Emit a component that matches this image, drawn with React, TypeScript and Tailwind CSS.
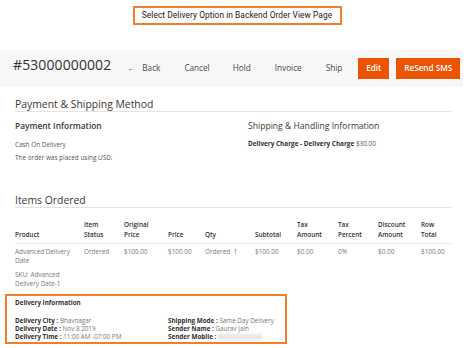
import React from "react";

const gridCols = "grid grid-cols-[69px_40px_44px_37px_50px_42px_41px_40px_43px_31px]";

export default function App() {
  return (
    <div className="w-[474px] h-[348px] bg-white overflow-hidden font-['Open_Sans',sans-serif] text-[#303030]">
      {/* Caption box */}
      <div className="flex justify-center pt-[6px]">
        <div className="w-[209px] h-[19px] border-2 border-[#ef7f2c] flex items-center justify-center text-[8.4px] text-[#222] font-['Roboto',sans-serif] tracking-[0.05px]">
          Select Delivery Option in Backend Order View Page
        </div>
      </div>

      {/* Header band */}
      <div className="mt-[25px] w-[463px] h-[37px] bg-[#f7f7f7] flex items-center pl-[13px] text-[8.2px] text-[#514943]">
        <div className="text-[14px] text-[#333] leading-none -mt-[8px] tracking-[0.1px]">#53000000002</div>
        <div className="ml-[16px] flex items-center">
          <span className="text-[8px] mr-[7px]">&#8592;</span>
          <span>Back</span>
        </div>
        <span className="ml-[24px]">Cancel</span>
        <span className="ml-[23px]">Hold</span>
        <span className="ml-[24px]">Invoice</span>
        <span className="ml-[24px]">Ship</span>
        <div className="ml-[16px] w-[31px] h-[21px] bg-[#eb5202] text-white font-semibold flex items-center justify-center">Edit</div>
        <div className="ml-[7px] w-[64px] h-[21px] bg-[#eb5202] text-white font-semibold flex items-center justify-center">ReSend SMS</div>
      </div>

      {/* Payment & Shipping */}
      <div className="ml-[15px] w-[437px] mt-[10px]">
        <div className="h-[15px] text-[10.4px] leading-[14px] text-[#41362f] border-b border-[#e3e3e3]">Payment &amp; Shipping Method</div>
        <div className="flex">
          <div className="w-[233px]">
            <div className="mt-[8px] text-[8.4px] leading-[12px] font-semibold text-[#41362f]">Payment Information</div>
            <div className="mt-[8px] text-[6.4px] leading-[10px] text-[#555]">Cash On Delivery</div>
            <div className="mt-[3px] text-[6.4px] leading-[10px] text-[#555]">The order was placed using USD.</div>
          </div>
          <div>
            <div className="mt-[8px] text-[8.6px] leading-[12px] text-[#41362f]">Shipping &amp; Handling Information</div>
            <div className="mt-[7px] text-[6.4px] leading-[10px] text-[#555]">
              <span className="font-bold text-[#303030]">Delivery Charge - Delivery Charge</span> $30.00
            </div>
          </div>
        </div>

        {/* Items Ordered */}
        <div className="mt-[30px] h-[15px] text-[10.4px] leading-[14px] text-[#41362f] border-b border-[#e3e3e3]">Items Ordered</div>
        <div className={`${gridCols} mt-[12px] pb-[3px] border-b border-[#ececec] text-[6.4px] leading-[10px] font-semibold text-[#303030] items-end`}>
          <div>Product</div>
          <div>Item<br />Status</div>
          <div>Original<br />Price</div>
          <div>Price</div>
          <div>Qty</div>
          <div>Subtotal</div>
          <div>Tax<br />Amount</div>
          <div>Tax<br />Percent</div>
          <div>Discount<br />Amount</div>
          <div>Row<br />Total</div>
        </div>
        <div className={`${gridCols} pt-[4px] text-[6.4px] leading-[8.5px] text-[#777] items-start`}>
          <div>
            <div>Advanced Delivery<br />Date</div>
            <div className="mt-[5px] leading-[9px]">SKU: Advanced<br />Delivery Date-1</div>
          </div>
          <div>Ordered</div>
          <div>$100.00</div>
          <div>$100.00</div>
          <div>Ordered&nbsp;&nbsp;1</div>
          <div>$100.00</div>
          <div>$0.00</div>
          <div>0%</div>
          <div>$0.00</div>
          <div>$100.00</div>
        </div>
      </div>

      {/* Delivery Information box */}
      <div className="ml-[5px] mt-[6px] w-[282px] border-2 border-[#ef7f2c] pl-[8px] pt-[2px] pb-[1px] text-[6.3px] text-[#303030]">
        <div className="leading-[10px] font-bold">Delivery Information</div>
        <div className="mt-[9px] flex leading-[8px]">
          <div className="w-[153px]">
            <div><span className="font-bold">Delivery City :</span> <span className="text-[#777]">Bhavnagar</span></div>
            <div><span className="font-bold">Delivery Date :</span> <span className="text-[#777]">Nov 8 2019</span></div>
            <div><span className="font-bold">Delivery Time :</span> <span className="text-[#777]">11:00 AM -07:00 PM</span></div>
          </div>
          <div>
            <div><span className="font-bold">Shipping Mode :</span> <span className="text-[#777]">Same Day Delivery</span></div>
            <div><span className="font-bold">Sender Name :</span> <span className="text-[#777]">Gaurav Jain</span></div>
            <div className="flex items-center"><span className="font-bold">Sender Mobile :</span>
              <span className="ml-[2px] inline-block w-[44px] h-[6px] bg-[#e6e6e6] blur-[1.5px]"></span>
            </div>
          </div>
        </div>
      </div>
    </div>
  );
}
